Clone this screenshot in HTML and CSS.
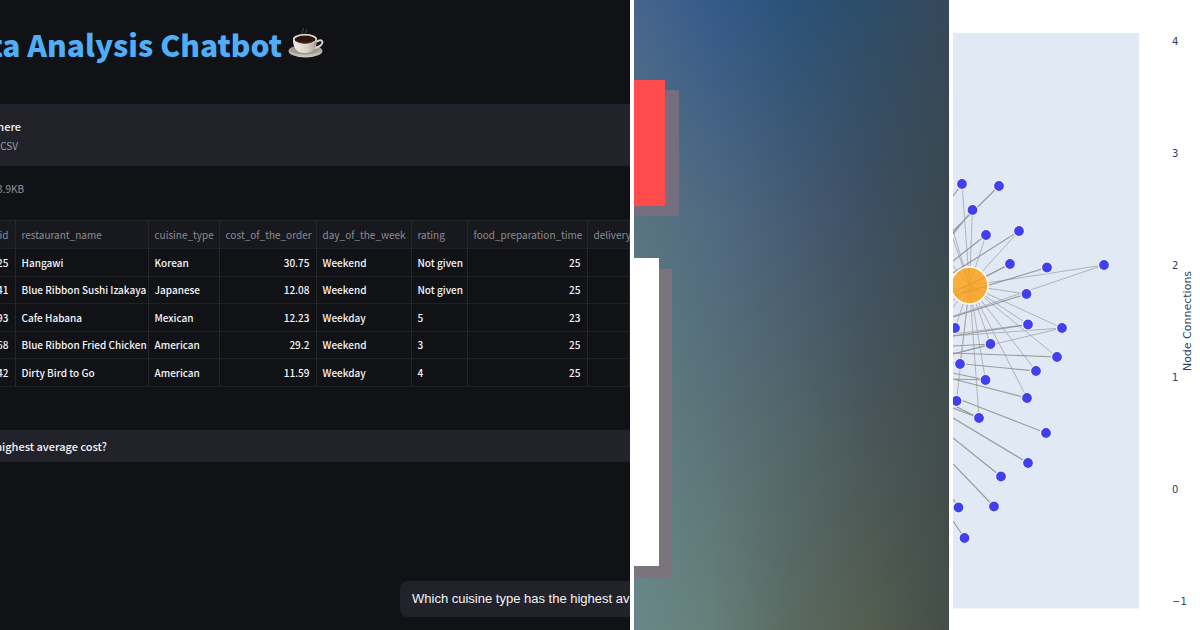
FILE: index.html
```html
<!DOCTYPE html>
<html lang="en">
<head>
<meta charset="utf-8">
<title>Data Analysis Chatbot</title>
<link rel="stylesheet" href="styles.css">
</head>
<body>
<main class="gallery">
  <section class="chatbot">
    <header class="title-row">
      <h1 class="title">ta Analysis Chatbot</h1>
      <svg class="cup" viewBox="0 0 36 32" role="img" aria-label="Coffee">
        <defs>
          <linearGradient id="china" x1="0" x2="1"><stop offset="0" stop-color="#f3efe7"/><stop offset=".6" stop-color="#d8d1c6"/><stop offset="1" stop-color="#a59c91"/></linearGradient>
          <linearGradient id="plate" x1="0" y1="0" x2="0" y2="1"><stop offset="0" stop-color="#8d867d"/><stop offset="1" stop-color="#d4cdc3"/></linearGradient>
        </defs>
        <path d="M15 6C12 3 17 3 15 0M18 6c-2-2 2-3 0-5" fill="none" stroke="#777" stroke-width="1" opacity=".55"/>
        <ellipse cx="17.500" cy="23" rx="17" ry="6.500" fill="url(#plate)"/>
        <ellipse cx="17" cy="22" rx="14" ry="4.500" fill="#a19a90"/>
        <path d="M28 14c6-4 8 0 5 3-2 2-4 3-7 3" fill="none" stroke="#dcd6cc" stroke-width="1.800"/>
        <path d="M5 11c0 8 3 14 12 14s12-6 12-14z" fill="url(#china)"/>
        <ellipse cx="17" cy="11" rx="12" ry="5" fill="#e9e3da"/>
        <ellipse cx="17" cy="11.500" rx="10.500" ry="3.900" fill="#2c1711"/>
        <path d="M9 13c3 3 13 3 16 0" fill="none" stroke="#6b3b28" stroke-width="1"/>
      </svg>
    </header>
    <div class="dropzone">
      <p class="clip drop-label">here</p>
      <p class="clip drop-hint">CSV</p>
    </div>
    <p class="clip file-size">3.9KB</p>
    <table class="data">
      <colgroup><col class="c-id"><col class="c-name"><col class="c-type"><col class="c-cost"><col class="c-day"><col class="c-rating"><col class="c-prep"><col></colgroup>
      <thead>
        <tr><th class="num">id</th><th>restaurant_name</th><th>cuisine_type</th><th class="num">cost_of_the_order</th><th>day_of_the_week</th><th>rating</th><th class="num">food_preparation_time</th><th>delivery</th></tr>
      </thead>
      <tbody>
        <tr><td class="num">25</td><td>Hangawi</td><td>Korean</td><td class="num">30.75</td><td>Weekend</td><td>Not given</td><td class="num">25</td><td></td></tr>
        <tr><td class="num">41</td><td>Blue Ribbon Sushi Izakaya</td><td>Japanese</td><td class="num">12.08</td><td>Weekend</td><td>Not given</td><td class="num">25</td><td></td></tr>
        <tr><td class="num">93</td><td>Cafe Habana</td><td>Mexican</td><td class="num">12.23</td><td>Weekday</td><td>5</td><td class="num">23</td><td></td></tr>
        <tr><td class="num">68</td><td>Blue Ribbon Fried Chicken</td><td>American</td><td class="num">29.2</td><td>Weekend</td><td>3</td><td class="num">25</td><td></td></tr>
        <tr><td class="num">42</td><td>Dirty Bird to Go</td><td>American</td><td class="num">11.59</td><td>Weekday</td><td>4</td><td class="num">25</td><td></td></tr>
      </tbody>
    </table>
    <div class="question"><p class="clip question-text">highest average cost?</p></div>
    <p class="bubble">Which cuisine type has the highest av</p>
  </section>

  <section class="backdrop">
    <div class="wash wash-low"></div>
    <div class="wash wash-mid"></div>
    <div class="wash wash-top"></div>
    <div class="block block-red"></div>
    <div class="block block-white"></div>
  </section>

  <section class="network">
    <svg class="chart" viewBox="953 0 247 630" role="img" aria-label="Node Connections">
      <clipPath id="plot"><rect x="953" y="33" width="186" height="576"/></clipPath>
      <rect x="953" y="33" width="186" height="575.500" fill="#e1e9f5"/>
      <g clip-path="url(#plot)">
        <g class="edges">
          <path d="M969.500 285.500L962 184M969.500 285.500L972.500 210M969.500 285.500L986 235M969.500 285.500L1019 231M969.500 285.500L1010 264M969.500 285.500L1104 265M969.500 285.500L1026.500 294M969.500 285.500L1028 324.500M969.500 285.500L1062 328M969.500 285.500L955 328M969.500 285.500L990.500 344M969.500 285.500L1057 357M969.500 285.500L960 364M969.500 285.500L1036 371M969.500 285.500L985.500 380M969.500 285.500L1027 398M969.500 285.500L956.500 401M969.500 285.500L979 418M969.500 285.500L945 216M969.500 285.500L938 180M969.500 285.500L945 308M969.500 285.500L940 325M969.500 285.500L940 250M969.500 285.500L940 292"/>
          <path d="M1104 265L945 319M953 336L1062 328L953 354M953 334L1028 324.500"/>
        </g>
        <g class="edges strong">
          <path d="M953 196L962 184M953 231L999 186M953 234L972.500 210M953 261L986 235M953 273L1019 231M945 297L1010 264M953 296L1047 267.500M953 317L1026.500 294M953 336L1028 324.500M953 346L990.500 344M953 354L990.500 344M953 353L1057 357M953 363L1036 371M953 373L985.500 380M953 379L985.500 380M953 379L1027 398M953 405L979 418M953 408L979 418M956 398L1046 433M953 418L1028 463M953 438L1001 476.500M953 464L994 506.500M953 499L958.500 507.500M953 521L964.500 538"/>
        </g>
        <g class="nodes">
          <circle cx="962" cy="184" r="5.500"/><circle cx="999" cy="186" r="5.500"/><circle cx="972.500" cy="210" r="5.500"/><circle cx="986" cy="235" r="5.500"/><circle cx="1019" cy="231" r="5.500"/><circle cx="1010" cy="264" r="5.500"/><circle cx="1047" cy="267.500" r="5.500"/><circle cx="1104" cy="265" r="5.500"/><circle cx="1026.500" cy="294" r="5.500"/><circle cx="1028" cy="324.500" r="5.500"/><circle cx="1062" cy="328" r="5.500"/><circle cx="955" cy="328" r="5.500"/><circle cx="990.500" cy="344" r="5.500"/><circle cx="1057" cy="357" r="5.500"/><circle cx="960" cy="364" r="5.500"/><circle cx="1036" cy="371" r="5.500"/><circle cx="985.500" cy="380" r="5.500"/><circle cx="1027" cy="398" r="5.500"/><circle cx="956.500" cy="401" r="5.500"/><circle cx="979" cy="418" r="5.500"/><circle cx="1046" cy="433" r="5.500"/><circle cx="1028" cy="463" r="5.500"/><circle cx="1001" cy="476.500" r="5.500"/><circle cx="994" cy="506.500" r="5.500"/><circle cx="958.500" cy="507.500" r="5.500"/><circle cx="964.500" cy="538" r="5.500"/>
        </g>
        <circle cx="969.500" cy="285.500" r="18.500" fill="#ff9f0f" fill-opacity=".8" stroke="#fff" stroke-width="1.500"/>
      </g>
      <g class="ticks">
        <text x="1172" y="45">4</text><text x="1172" y="157">3</text><text x="1172" y="269">2</text><text x="1172" y="381">1</text><text x="1172" y="493">0</text><text x="1172" y="605">−1</text>
      </g>
      <text class="axis-title" text-anchor="middle" transform="translate(1191 321) rotate(-90)">Node Connections</text>
    </svg>
  </section>
</main>
</body>
</html>
```
FILE: styles.css
```css
* { box-sizing: border-box; }
body { margin: 0; background: #fff; }
h1, p { margin: 0; }

.gallery {
  display: grid;
  grid-template-columns: 630fr 315fr 247fr;
  gap: 4px;
  min-height: 100vh;
}

/* Chatbot panel */
.chatbot {
  display: flex;
  flex-direction: column;
  min-width: 0;
  overflow: hidden;
  background: #111216;
  color: #f5f5f7;
  font-family: "Noto Sans CJK SC", "Noto Sans", sans-serif;
  font-size: 11px;
  font-weight: 500;
}
.title-row { display: flex; align-items: center; height: 104px; padding-bottom: 16px; }
.title {
  display: flex;
  flex: none;
  justify-content: flex-end;
  width: 282px;
  color: #50adf8;
  font-size: 30px;
  font-weight: 900;
  line-height: 40px;
  white-space: nowrap;
}
.cup { width: 36px; height: 32px; margin-left: 6px; }
.clip { display: flex; justify-content: flex-end; white-space: nowrap; line-height: 19px; }
.dropzone { height: 62px; padding-top: 13px; background: #22222b; }
.drop-label { width: 21px; }
.drop-hint { width: 18px; color: #a0a1a7; font-size: 10px; font-weight: 400; }
.file-size { width: 24px; margin-top: 13px; color: #96979d; font-size: 10px; font-weight: 400; }

.data {
  width: calc(100% + 41px);
  margin: 22px 0 0 -41px;
  border-collapse: collapse;
  table-layout: fixed;
  border-top: 1px solid #24252a;
  border-bottom: 1px solid #2c2d32;
  font-size: 10px;
}
.data th, .data td {
  height: 28px;
  padding: 0 6px;
  border-right: 1px solid #26272c;
  border-bottom: 1px solid #202126;
  line-height: 20px;
  text-align: left;
  white-space: nowrap;
}
.data th { background: #18191e; color: #8b8c92; font-weight: 400; }
.data tr:nth-child(even) td { height: 27px; }
.data .num { text-align: right; }
.c-id { width: 56px; }
.c-name { width: 133px; }
.c-type { width: 71px; }
.c-cost { width: 97px; }
.c-day { width: 95px; }
.c-rating { width: 56px; }
.c-prep { width: 120px; }

.question { margin-top: 43px; padding: 6px 0; background: #22222b; }
.question-text { width: 107px; line-height: 20px; }
.bubble {
  margin: auto 0 13px 400px;
  padding: 8px 0 8px 12px;
  overflow: hidden;
  border-radius: 8px 0 0 8px;
  background: #22222b;
  font: 400 13px/20px "Liberation Sans", sans-serif;
  white-space: nowrap;
}

/* Backdrop panel: stacked horizontal washes that fade into each other */
.backdrop {
  position: relative;
  display: flex;
  flex-direction: column;
  align-items: flex-start;
  gap: 52px;
  padding-top: 80px;
  overflow: hidden;
  background: linear-gradient(90deg, #6a8889, #66807a 25%, #5a6b62 50%, #545e50 75%, #454e4a);
}
.wash { position: absolute; inset: 0; }
.wash-low {
  background: linear-gradient(90deg, #617f82, #5a7278 25%, #52666a 50%, #48565a 75%, #414d4c);
  mask-image: linear-gradient(#000 66%, transparent);
}
.wash-mid {
  background: linear-gradient(90deg, #587480, #506982 25%, #455b74 50%, #3e4f62 75%, #3a494f);
  mask-image: linear-gradient(#000 33%, transparent 66%);
}
.wash-top {
  background: linear-gradient(90deg, #47658d, #345a89 25%, #2a5278 50%, #2d4d68 75%, #36485a);
  mask-image: linear-gradient(#000, transparent 33%);
}
.block { position: relative; margin-left: -20px; }
.block-red { width: 51px; height: 126px; background: #ff4b4b; box-shadow: 14px 10px #746e7e; }
.block-white { width: 45px; height: 308px; background: #fff; box-shadow: 13px 11px #7b747d; }

/* Network chart */
.network { min-width: 0; }
.chart { display: block; width: 100%; height: auto; }
.edges { fill: none; stroke: #888; stroke-width: 1; opacity: .55; }
.strong { stroke-width: 1.2; opacity: .8; }
.nodes { fill: #4140ee; stroke: #f4f6fd; stroke-width: 1.2; }
.ticks, .axis-title { fill: #2a3f5f; font-family: "DejaVu Sans", sans-serif; }
.ticks { font-size: 10px; }
.axis-title { font-size: 11px; }
```
